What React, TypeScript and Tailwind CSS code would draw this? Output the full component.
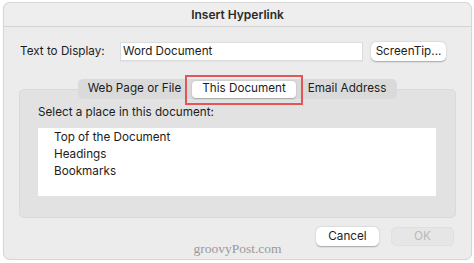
import React from 'react';

const items = ['Top of the Document', 'Headings', 'Bookmarks'];

export default function App() {
  return (
    <div className="w-[474px] h-[263px] bg-white pt-[2px] pl-[3px] overflow-hidden font-['Inter','Liberation_Sans',sans-serif] text-[11.7px] text-[#1d1d1d]">
      <div className="relative w-[469px] h-[258px] rounded-[7px] bg-[#ececec] border border-[#d6d6d6] shadow-[0_0_1px_rgba(0,0,0,0.15)]">
        {/* Title bar */}
        <div className="h-[24px] flex items-center justify-center border-b border-[#d3d3d3] bg-[#eeeeee] rounded-t-[7px]">
          <span className="font-semibold text-[12px] text-[#2a2a2a]">Insert Hyperlink</span>
        </div>

        {/* Text to display row */}
        <div className="flex items-center mt-[15px] pl-[16px]">
          <span className="w-[100px]">Text to Display:</span>
          <div className="w-[243px] h-[19px] bg-white border border-[#dcdcdc] flex items-center pl-[2px] shadow-[0_1px_0_rgba(0,0,0,0.04)]">
            Word Document
          </div>
          <button className="ml-[8px] w-[75px] h-[19px] bg-white rounded-[5px] shadow-[0_0.5px_1.5px_rgba(0,0,0,0.3)] flex items-center justify-center">
            ScreenTip...
          </button>
        </div>

        {/* Tabs + group */}
        <div className="mt-[18px] ml-[15px] w-[437px]">
          <div className="relative z-10 flex justify-center">
            <div className="flex items-center h-[20px] bg-[#dadada] rounded-[5px] px-[1px]">
              <div className="px-[9px] h-[17px] flex items-center">Web Page or File</div>
              <div className="relative mx-[2px]">
                <div className="px-[10px] h-[17px] flex items-center bg-white rounded-[4px] shadow-[0_0.5px_1.5px_rgba(0,0,0,0.25)]">
                  This Document
                </div>
                <div className="absolute -left-[7px] -right-[7px] -top-[6px] -bottom-[7px] border-2 border-[#e4555a]" />
              </div>
              <div className="px-[10px] h-[17px] flex items-center">Email Address</div>
            </div>
          </div>
          <div className="-mt-[10px] h-[129px] bg-[#e2e2e2] rounded-[5px] border border-[#dadada] pt-[14px] pl-[18px]">
            <div className="leading-[17px]">Select a place in this document:</div>
            <div className="mt-[7px] w-[398px] h-[68px] bg-white pl-[16px] pt-[1px]">
              {items.map((it) => (
                <div key={it} className="leading-[17px]">{it}</div>
              ))}
            </div>
          </div>
        </div>

        {/* Buttons */}
        <div className="flex justify-end gap-[12px] mt-[9px] pr-[17px]">
          <button className="w-[63px] h-[19px] bg-white rounded-[5px] shadow-[0_0.5px_1.5px_rgba(0,0,0,0.3)] flex items-center justify-center">
            Cancel
          </button>
          <button className="w-[63px] h-[19px] bg-[#e6e6e6] rounded-[5px] border border-[#e0e0e0] text-[#b9b9b9] flex items-center justify-center">
            OK
          </button>
        </div>

        <div className="absolute left-0 right-0 bottom-[2px] text-center font-['Liberation_Serif',serif] text-[13.5px] leading-[16px] text-[#9a9a9a]">
          groovyPost.com
        </div>
      </div>
    </div>
  );
}
